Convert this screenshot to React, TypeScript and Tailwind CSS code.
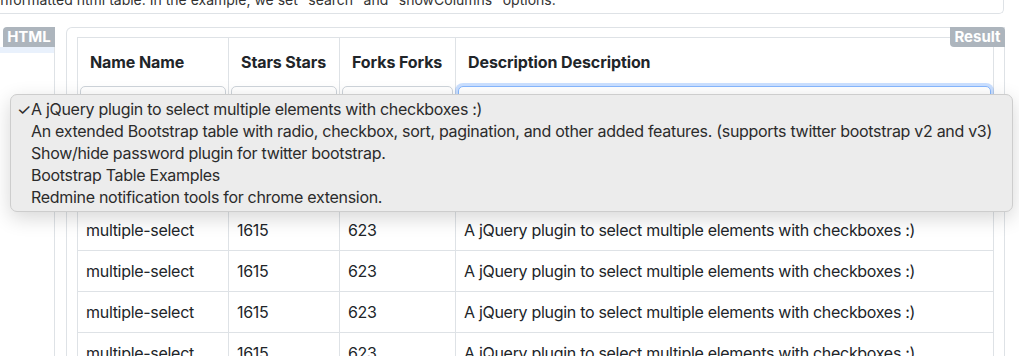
import React from 'react';

const rows = Array.from({ length: 6 }, () => ({
  name: 'multiple-select',
  stars: '1615',
  forks: '623',
  description: 'A jQuery plugin to select multiple elements with checkboxes :)',
}));

const options = [
  'A jQuery plugin to select multiple elements with checkboxes :)',
  'An extended Bootstrap table with radio, checkbox, sort, pagination, and other added features. (supports twitter bootstrap v2 and v3)',
  'Show/hide password plugin for twitter bootstrap.',
  'Bootstrap Table Examples',
  'Redmine notification tools for chrome extension.',
];

const columns = [
  { title: 'Name Name', width: 'w-[151px]' },
  { title: 'Stars Stars', width: 'w-[111px]' },
  { title: 'Forks Forks', width: 'w-[116px]' },
  { title: 'Description Description', width: 'w-[539px]' },
];

export default function App() {
  return (
    <div className="relative w-[1019px] h-[356px] overflow-hidden bg-white text-[#212529] font-['Inter','Liberation_Sans',sans-serif]">
      {/* описание примера (обрезано сверху) */}
      <div className="-mt-[12px] -ml-[20px] w-[1024px] h-[26px] border border-t-0 border-[#dee2e6] rounded-b-[5px] pl-[11px] pt-[2px] text-[14px] leading-[20px] text-[#333] whitespace-nowrap">
        unformatted html table. In the example, we set "search" and "showColumns" options.
      </div>

      <div className="flex mt-[13px] h-[330px]">
        {/* HTML */}
        <div className="w-[55px] flex flex-col">
          <div className="ml-[3px] w-[52px] h-[20px] bg-[#adb5bd] rounded-tl-[4px] text-white font-bold text-[15px] leading-[20px] text-center">
            HTML
          </div>
          <div className="flex-1 border-r border-[#dee2e6]">
            <div className="h-[6px] bg-[#e9f1fc]" />
          </div>
        </div>

        {/* Result */}
        <div className="relative ml-[11px] w-[939px] border border-b-0 border-[#dee2e6] rounded-tl-[6px] pt-[9px] pl-[10px]">
          <div className="absolute -top-[1px] -right-[1px] w-[55px] h-[20px] bg-[#adb5bd] rounded-bl-[4px] rounded-tr-[4px] text-white font-bold text-[15px] leading-[20px] text-center">
            Result
          </div>

          <table className="table-fixed border-separate border-spacing-0 w-[917px] text-[16px] leading-[24px]">
            <thead>
              <tr>
                {columns.map((col, i) => (
                  <th
                    key={col.title}
                    className={`${col.width} p-0 text-left align-top font-bold tracking-[-0.1px] border-t border-l border-[#dee2e6] ${i === columns.length - 1 ? 'border-r' : ''}`}
                  >
                    <div className="h-[48px] flex items-center px-[12px] whitespace-nowrap">{col.title}</div>
                    <div className="px-[2px] pb-[3px]">
                      {i === columns.length - 1 ? (
                        <div className="h-[38px] rounded-[5px] border border-[#86b7fe] shadow-[0_0_0_3px_rgba(13,110,253,0.22)] bg-white" />
                      ) : (
                        <div className="h-[38px] rounded-[5px] border border-[#ced4da] bg-white" />
                      )}
                    </div>
                  </th>
                ))}
              </tr>
            </thead>
            <tbody className="tracking-[-0.3px]">
              {rows.map((row, idx) => (
                <tr key={idx}>
                  <td className="h-[41px] px-[8px] border-t border-l border-[#dee2e6] whitespace-nowrap">{row.name}</td>
                  <td className="h-[41px] px-[8px] border-t border-l border-[#dee2e6]">{row.stars}</td>
                  <td className="h-[41px] px-[8px] border-t border-l border-[#dee2e6]">{row.forks}</td>
                  <td className="h-[41px] px-[8px] border-t border-l border-r border-[#dee2e6] whitespace-nowrap">{row.description}</td>
                </tr>
              ))}
            </tbody>
          </table>
        </div>
      </div>

      {/* выпадающий список фильтра описания */}
      <div className="absolute left-[10px] top-[94px] w-[1003px] h-[118px] pt-[3px] rounded-[7px] border border-[#cdcdcd] bg-[#ececec] shadow-[0_6px_20px_rgba(0,0,0,0.16)] text-[16px] tracking-[-0.3px] text-[#2b2b2b]">
        {options.map((opt, i) => (
          <div key={opt} className="flex h-[22px] items-center whitespace-nowrap">
            <span className="w-[20px] shrink-0 pl-[6px] text-[16px] leading-[22px]">{i === 0 ? '✓' : ''}</span>
            <span>{opt}</span>
          </div>
        ))}
      </div>
    </div>
  );
}
